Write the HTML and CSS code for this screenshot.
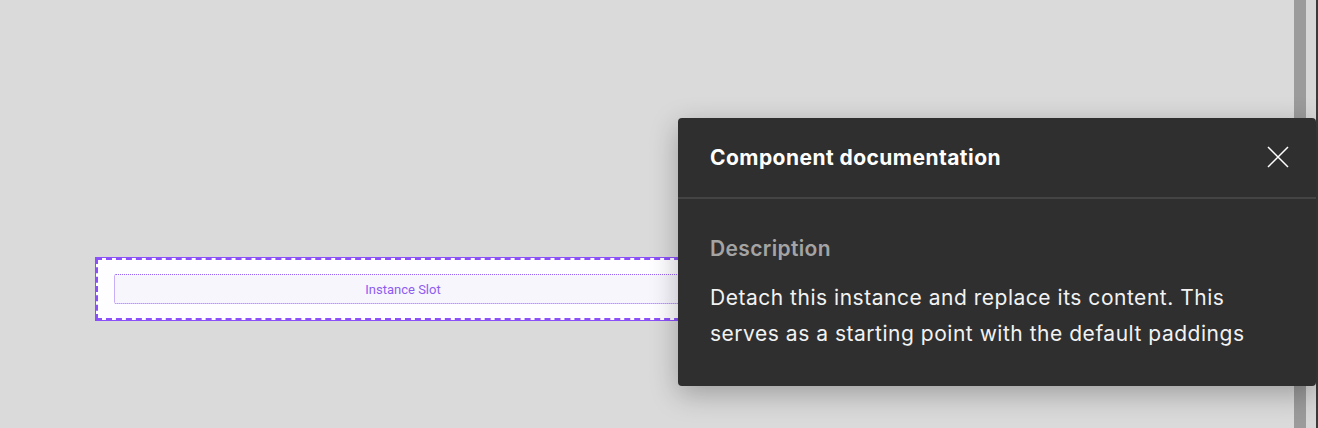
FILE: index.html
```html
<!DOCTYPE html>
<html>
<head>
<meta charset="utf-8">
<link rel="stylesheet" href="styles.css">
</head>
<body>
<div class="page">
  <div class="canvas">
    <div class="slot">
      <div class="slot-inner">Instance Slot</div>
    </div>
    <div class="panel">
      <div class="panel-head">
        <div class="panel-title">Component documentation</div>
        <svg class="close" width="22" height="22" viewBox="0 0 22 22"><path d="M1 1L21 21M21 1L1 21" stroke="#ffffff" stroke-width="1.5" fill="none"/></svg>
      </div>
      <div class="panel-body">
        <div class="label">Description</div>
        <p class="desc">Detach this instance and replace its content. This serves as a starting point with the default paddings</p>
      </div>
    </div>
  </div>
  <div class="scroll">
    <div class="scroll-bar"></div>
    <div class="scroll-track"></div>
    <div class="scroll-edge"></div>
  </div>
</div>
</body>
</html>
```
FILE: styles.css
```css
html, body { margin: 0; padding: 0; }
body { font-family: Inter, "Noto Sans", sans-serif; background: #dadada; }
.page { display: flex; width: 1318px; height: 428px; overflow: hidden; }
.canvas { position: relative; flex: 1; background: #dadada; padding: 258px 0 0 96px; box-sizing: border-box; }
.slot {
  width: 614px; height: 62px; box-sizing: border-box;
  border: 2px dashed #8b50fa; box-shadow: 0 0 0 1px #8b50fa;
  background: #fefdff; padding: 14px 16px;
}
.slot-inner {
  height: 30px; box-sizing: border-box; border: 1px dotted #9566f5; border-radius: 2px;
  background: #f8f6fd; color: #8d5cf0; font-family: Roboto, sans-serif; font-size: 13px;
  display: flex; align-items: center; justify-content: center;
}
.panel {
  position: absolute; left: 678px; top: 118px; width: 638px; height: 268px;
  background: #2f2f2f; border-radius: 4px; box-shadow: 0 8px 28px rgba(0,0,0,0.28);
  color: #fff;
}
.panel-head {
  height: 81px; box-sizing: border-box; border-bottom: 2px solid #444;
  display: flex; align-items: center; justify-content: space-between; padding: 0 27px 0 32px;
}
.panel-title { font-size: 21px; font-weight: 700; letter-spacing: 0.45px; }
.close { display: block; margin-top: -1px; }
.panel-body { padding: 38px 32px 0; }
.label { font-size: 21px; font-weight: 600; color: #a4a4a4; line-height: 24px; letter-spacing: 0.35px; }
.desc { margin: 19px 0 0; font-size: 21px; line-height: 36px; color: #f2f2f2; letter-spacing: 0.52px; }
.scroll { display: flex; width: 24px; flex: none; }
.scroll-bar { width: 12px; background: #9b9b9b; }
.scroll-track { width: 10px; background: #d7d7d7; }
.scroll-edge { width: 2px; background: #3a3a3a; }
```
